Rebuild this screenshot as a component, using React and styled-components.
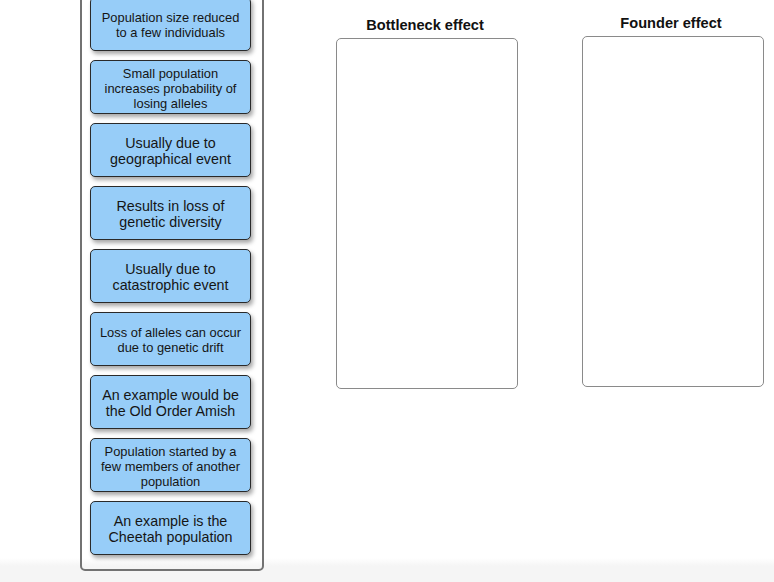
import React from "react";
import styled, { createGlobalStyle } from "styled-components";

const GlobalStyle = createGlobalStyle`
  html, body {
    margin: 0;
    padding: 0;
    height: 100%;
  }
  body {
    font-family: "Liberation Sans", Arial, Helvetica, sans-serif;
    color: #111;
    overflow: hidden;
    background: linear-gradient(
      to bottom,
      #ffffff 0,
      #ffffff 558px,
      #f5f5f5 566px,
      #f5f5f5 100%
    );
  }
`;

const Page = styled.div`
  display: flex;
  align-items: flex-start;
  padding-left: 80px;
`;

const Bank = styled.div`
  box-sizing: border-box;
  width: 184px;
  margin-top: -14px;
  padding: 9px 0 14px 8px;
  border: 2px solid #727272;
  border-radius: 0 0 5px 5px;
  display: flex;
  flex-direction: column;
  gap: 9px;
`;

const Card = styled.div`
  box-sizing: border-box;
  width: 161px;
  height: 54px;
  padding-top: 2px;
  background: #97cdf8;
  border: 1px solid #2a2a2a;
  border-radius: 5px;
  box-shadow: 2px 3px 4px rgba(0, 0, 0, 0.35);
  display: flex;
  align-items: center;
  justify-content: center;
  text-align: center;
  font-size: ${(p) => (p.$small ? "12.9px" : "14.3px")};
  line-height: ${(p) => (p.$small ? "15px" : "16px")};
  color: #151515;
`;

const Column = styled.div`
  width: 182px;
  margin-left: ${(p) => p.$gap}px;
  margin-top: ${(p) => p.$top}px;
  display: flex;
  flex-direction: column;
`;

const Heading = styled.div`
  font-weight: bold;
  font-size: 14.6px;
  line-height: 18px;
  text-align: center;
  padding-right: 4px;
  margin-bottom: 4px;
  color: #111;
`;

const DropZone = styled.div`
  box-sizing: border-box;
  height: 351px;
  border: 1px solid #8a8a8a;
  border-radius: 5px;
  background: #fff;
`;

const cards = [
  { lines: ["Population size reduced", "to a few individuals"], small: true },
  {
    lines: ["Small population", "increases probability of", "losing alleles"],
    small: true,
  },
  { lines: ["Usually due to", "geographical event"] },
  { lines: ["Results in loss of", "genetic diversity"] },
  { lines: ["Usually due to", "catastrophic event"] },
  {
    lines: ["Loss of alleles can occur", "due to genetic drift"],
    small: true,
  },
  { lines: ["An example would be", "the Old Order Amish"] },
  {
    lines: ["Population started by a", "few members of another", "population"],
    small: true,
  },
  { lines: ["An example is the", "Cheetah population"] },
];

const targets = [
  { title: "Bottleneck effect", gap: 72, top: 16 },
  { title: "Founder effect", gap: 64, top: 14 },
];

const App = () => {
  return (
    <>
      <GlobalStyle />
      <Page>
        <Bank>
          {cards.map((card, id) => (
            <Card key={id} $small={card.small}>
              <div>
                {card.lines.map((line, i) => (
                  <div key={i}>{line}</div>
                ))}
              </div>
            </Card>
          ))}
        </Bank>

        {targets.map((t) => (
          <Column key={t.title} $gap={t.gap} $top={t.top}>
            <Heading>{t.title}</Heading>
            <DropZone />
          </Column>
        ))}
      </Page>
    </>
  );
};

export default App;
